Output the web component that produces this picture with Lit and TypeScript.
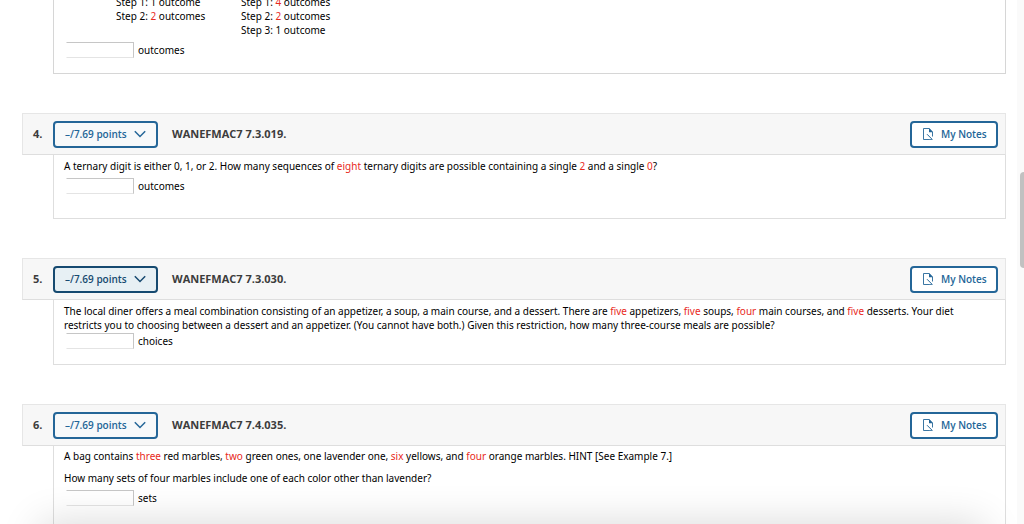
import { LitElement, html, css, svg, TemplateResult } from "lit";
import { customElement, property } from "lit/decorators.js";

const chevron = html`<svg width="12" height="8" viewBox="0 0 12 8" fill="none" stroke="currentColor" stroke-width="1.5" aria-hidden="true">${svg`<path d="M0.8 1.2 L6 6.5 L11.2 1.2" />`}</svg>`;

const noteIcon = html`<svg width="10" height="12" viewBox="0 0 10 12" fill="none" stroke="currentColor" aria-hidden="true">${svg`<path d="M5.5 11.5H.5V.5h5.7L9.5 4v4.5" stroke-width="0.9" /><path d="M6 0v4.2h4z" fill="currentColor" stroke="none" /><path d="M4 6.2l5 5" stroke-width="1" /><path d="M5 11.5h4.5" stroke-width="0.8" />`}</svg>`;

const red = (text: string) => html`<span class="red">${text}</span>`;

const shared = css`
  * {
    box-sizing: border-box;
  }
  .red {
    color: #e8291c;
  }
  .answer {
    display: flex;
    align-items: center;
    gap: 4px;
    padding-left: 2px;
    height: 16px;
  }
  .answer input {
    width: 68px;
    height: 16px;
    margin: 0;
    padding: 0 3px;
    border: 1px solid #c6c6c6;
    border-left-color: transparent;
    border-bottom-color: #e4e4e4;
    background: #fff;
    font: inherit;
    outline: none;
  }
`;

@customElement("question-block")
class QuestionBlock extends LitElement {
  @property({ type: Number }) number = 0;
  @property() code = "";
  @property({ type: Boolean }) active = false;

  static styles = [
    shared,
    css`
      :host {
        display: block;
      }
      header {
        display: flex;
        align-items: center;
        height: 42px;
        padding: 0 7px 0 10px;
        border: 1px solid #e6e6e6;
        border-bottom-color: #dedede;
        background: #f7f7f7;
        color: #3c3c3c;
        font: 700 11px/16px "Open Sans", sans-serif;
      }
      .number {
        width: 20px;
      }
      h2 {
        flex: 1;
        margin: 0 0 0 14px;
        font: inherit;
      }
      button {
        display: flex;
        align-items: center;
        height: 27px;
        padding: 0 10px;
        border: 2px solid #246698;
        border-radius: 4px;
        background: #fff;
        color: #246698;
        font: 600 10px/16px "Open Sans", sans-serif;
        white-space: nowrap;
      }
      svg {
        flex: none;
      }
      .points {
        width: 105px;
        justify-content: space-between;
        background: #f7f9fa;
      }
      .points.active {
        border-color: #164a70;
        background: #e7f0f4;
        color: #164a70;
      }
      .notes {
        width: 88px;
        gap: 8px;
        padding-left: 11px;
      }
      .body {
        margin-left: 31px;
        border: 1px solid #dedede;
        border-top: 0;
      }
    `,
  ];

  render() {
    return html`
      <section>
        <header>
          <span class="number">${this.number}.</span>
          <button class="points ${this.active ? "active" : ""}">–/7.69 points ${chevron}</button>
          <h2>${this.code}</h2>
          <button class="notes">${noteIcon} My Notes</button>
        </header>
        <div class="body"><slot></slot></div>
      </section>
    `;
  }
}

@customElement("app-root")
class AppRoot extends LitElement {
  static styles = [
    shared,
    css`
      :host {
        display: flex;
        position: relative;
        height: 100vh;
        overflow: hidden;
        background: #fff;
        color: #000;
        font: 10px/14px "Noto Sans", sans-serif;
      }
      main {
        flex: 1;
        min-width: 0;
        display: flex;
        flex-direction: column;
        gap: 39px;
        margin-top: -5px;
        padding: 0 11px 0 22px;
      }
      .previous {
        margin-left: 31px;
        padding: 0 10px 15px;
        border: 1px solid #d6d6d6;
        border-top: 0;
      }
      .steps {
        display: flex;
        margin-bottom: 5px;
        padding-left: 52px;
      }
      .steps div {
        width: 125px;
        white-space: nowrap;
      }
      .content {
        padding: 4px 30px 0 10px;
      }
      .four {
        height: 63px;
      }
      .five {
        height: 64px;
      }
      .six {
        height: 100px;
        padding-top: 3px;
      }
      p {
        margin: 0;
      }
      .four p {
        margin-bottom: 5px;
      }
      .five p {
        margin-bottom: 1px;
      }
      .six p {
        margin-bottom: 8px;
      }
      .six p + p {
        margin-bottom: 5px;
      }
      .track {
        flex: none;
        width: 7px;
        display: grid;
        grid-template-rows: 172fr 96fr 256fr;
        padding-left: 3px;
        background: #fafafa;
      }
      .thumb {
        grid-row: 2;
        border-radius: 4px 0 0 4px;
        background: #c1c1c1;
      }
      .shade {
        position: absolute;
        left: 40px;
        right: 40px;
        top: 100%;
        height: 40px;
        box-shadow: 0 0 40px rgba(0, 0, 0, 0.16);
        pointer-events: none;
      }
    `,
  ];

  private answer(unit: string): TemplateResult {
    return html`<label class="answer"><input type="text" />${unit}</label>`;
  }

  render() {
    return html`
      <main>
        <section class="previous">
          <div class="steps">
            <div>Step 1: 1 outcome<br />Step 2: ${red("2")} outcomes</div>
            <div>Step 1: ${red("4")} outcomes<br />Step 2: ${red("2")} outcomes<br />Step 3: 1 outcome</div>
          </div>
          ${this.answer("outcomes")}
        </section>
        <question-block number="4" code="WANEFMAC7 7.3.019.">
          <div class="content four">
            <p>A ternary digit is either 0, 1, or 2. How many sequences of ${red("eight")} ternary digits are possible containing a single ${red("2")} and a single ${red("0")}?</p>
            ${this.answer("outcomes")}
          </div>
        </question-block>
        <question-block number="5" code="WANEFMAC7 7.3.030." active>
          <div class="content five">
            <p>The local diner offers a meal combination consisting of an appetizer, a soup, a main course, and a dessert. There are ${red("five")} appetizers, ${red("five")} soups, ${red("four")} main courses, and ${red("five")} desserts. Your diet restricts you to choosing between a dessert and an appetizer. (You cannot have both.) Given this restriction, how many three-course meals are possible?</p>
            ${this.answer("choices")}
          </div>
        </question-block>
        <question-block number="6" code="WANEFMAC7 7.4.035.">
          <div class="content six">
            <p>A bag contains ${red("three")} red marbles, ${red("two")} green ones, one lavender one, ${red("six")} yellows, and ${red("four")} orange marbles. HINT [See Example 7.]</p>
            <p>How many sets of four marbles include one of each color other than lavender?</p>
            ${this.answer("sets")}
          </div>
        </question-block>
      </main>
      <div class="track"><div class="thumb"></div></div>
      <div class="shade"></div>
    `;
  }
}
